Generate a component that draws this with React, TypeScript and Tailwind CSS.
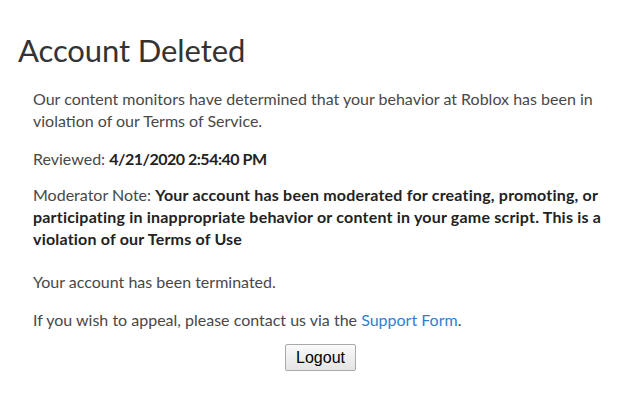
import React from 'react';

export default function App() {
  return (
    <div className="w-[629px] h-[400px] bg-white overflow-hidden" style={{ fontFamily: 'Lato, "Open Sans", sans-serif' }}>
      <div className="pl-[18px] pt-[31px]">
        <h1 className="text-[31px] leading-[38px] text-[#333] font-normal tracking-[-0.1px]">Account Deleted</h1>
        <div className="pl-[15px] pr-[10px] mt-[19px] text-[16px] leading-[22px] text-[#484848]">
          <p>
            Our content monitors have determined that your behavior at Roblox has been in violation of our Terms of
            Service.
          </p>
          <p className="mt-[16px]">
            Reviewed: <b className="text-[#222] tracking-[-0.5px]">4/21/2020 2:54:40 PM</b>
          </p>
          <p className="mt-[14px]">
            Moderator Note:{' '}
            <b className="text-[#222] tracking-[0.2px]">
              Your account has been moderated for creating, promoting, or participating in inappropriate behavior or
              content in your game script. This is a violation of our Terms of Use
            </b>
          </p>
          <p className="mt-[21px]">Your account has been terminated.</p>
          <p className="mt-[16px]">
            If you wish to appeal, please contact us via the <span className="text-[#2e7fd1]">Support Form</span>.
          </p>
        </div>
        <div className="flex justify-center mt-[13px] pr-[6px]">
          <button
            className="h-[27px] px-[10px] text-[16px] text-black border border-[#aaa] rounded-[2px] bg-gradient-to-b from-[#fafafa] to-[#e4e4e4]"
            style={{ fontFamily: '"Liberation Sans", Arial, sans-serif' }}
          >
            Logout
          </button>
        </div>
      </div>
    </div>
  );
}
